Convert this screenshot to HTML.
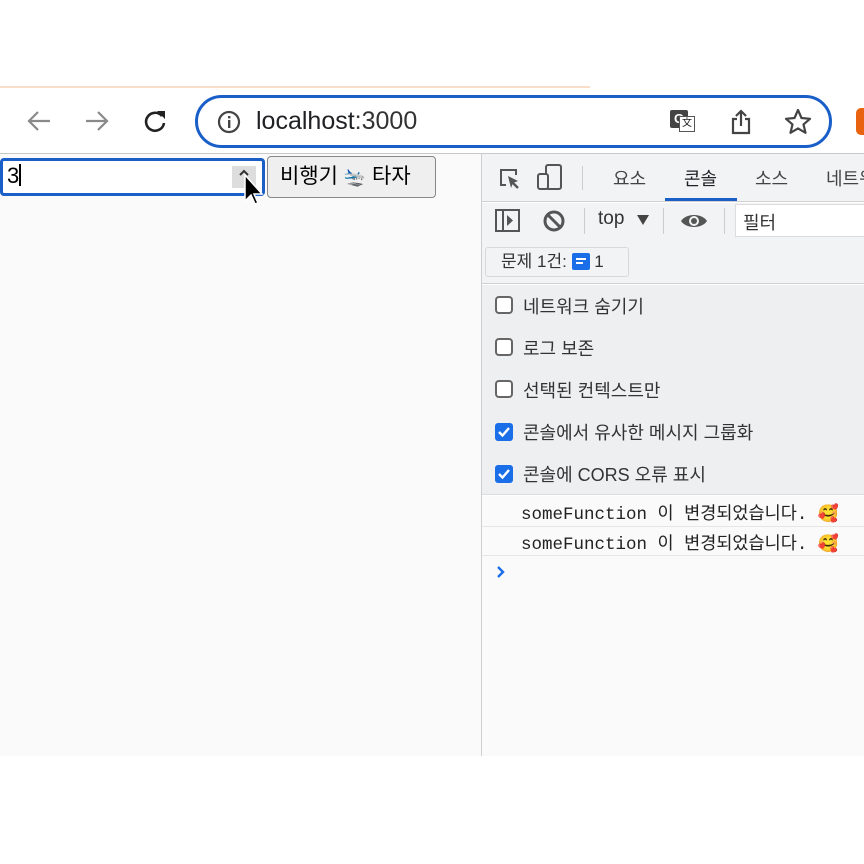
<!DOCTYPE html>
<html><head><meta charset="utf-8"><style>
*{margin:0;padding:0;box-sizing:border-box}
body{width:864px;height:864px;background:#fff;position:relative;overflow:hidden;font-family:"Liberation Sans","Noto Sans CJK KR",sans-serif;color:#202124}
.a{position:absolute}
.ko{font-family:"Liberation Sans","Noto Sans CJK KR",sans-serif}
</style></head><body>
<div class="a" style="left:0;top:86px;width:590px;height:2px;background:#f8ddc8"></div>
<div class="a" style="left:0;top:88px;width:864px;height:66px;background:#fff"></div>
<div class="a" style="left:0;top:153px;width:864px;height:1px;background:#c8c8c8"></div>
<svg class="a" style="left:26px;top:109px" width="26" height="24" viewBox="0 0 26 24"><path d="M24 12H3M12 3L3 12l9 9" stroke="#8a8a8a" stroke-width="2.2" fill="none"/></svg>
<svg class="a" style="left:84px;top:109px" width="26" height="24" viewBox="0 0 26 24"><path d="M2 12h21M14 3l9 9-9 9" stroke="#8a8a8a" stroke-width="2.2" fill="none"/></svg>
<svg class="a" style="left:142px;top:108px" width="26" height="26" viewBox="0 0 26 26"><path d="M20 8A9 9 0 1 0 22 15" stroke="#222" stroke-width="2.6" fill="none"/><path d="M15 3h8v8z" fill="#222"/></svg>
<div class="a" style="left:195px;top:95px;width:637px;height:53px;border:3px solid #1a5fc8;border-radius:27px;background:#fff"></div>
<svg class="a" style="left:216px;top:109px" width="26" height="26" viewBox="0 0 26 26"><circle cx="13" cy="13" r="10" stroke="#444" stroke-width="2.2" fill="none"/><rect x="12" y="11" width="2.4" height="8" fill="#444"/><rect x="12" y="7" width="2.4" height="2.4" fill="#444"/></svg>
<div class="a" style="left:256px;top:107px;font-size:25px;color:#202124">localhost<span style="color:#333">:3000</span></div>
<div class="a" style="left:670px;top:110px;width:18px;height:18px;background:#444;border-radius:2px;color:#fff;font-size:13px;font-weight:bold;text-align:center;line-height:18px">G</div>
<div class="a" style="left:679px;top:116px;width:16px;height:16px;border:1.5px solid #555;background:#fff;font-size:10px;text-align:center;line-height:13px">文</div>
<svg class="a" style="left:729px;top:108px" width="24" height="28" viewBox="0 0 24 28"><path d="M8 11H4v14h16V11h-4M12 18V3M7 8l5-5 5 5" stroke="#444" stroke-width="2.2" fill="none"/></svg>
<svg class="a" style="left:784px;top:108px" width="28" height="26" viewBox="0 0 28 26"><path d="M14 2l3.5 8 8.5.8-6.5 5.6 2 8.4L14 20.4 6.5 24.8l2-8.4L2 10.8l8.5-.8z" stroke="#444" stroke-width="2.2" fill="none" stroke-linejoin="round"/></svg>
<div class="a" style="left:856px;top:108px;width:16px;height:27px;background:#e8620f;border-radius:5px"></div>
<div class="a" style="left:0;top:154px;width:481px;height:602px;background:#fafafa"></div>
<div class="a" style="left:0;top:158px;width:265px;height:38px;border:3px solid #1a5fc8;border-radius:4px;background:#fff"></div>
<div class="a" style="left:7px;top:163px;font-size:22px;color:#000">3<span style="display:inline-block;width:1.5px;height:22px;background:#000;vertical-align:-3px"></span></div>
<div class="a" style="left:232px;top:166px;width:24px;height:22px;background:#ddd"></div>
<svg class="a" style="left:236px;top:166px" width="30" height="40" viewBox="0 0 30 40"><path d="M4 9l4-4 4 4" stroke="#333" stroke-width="2" fill="none"/><path d="M9 9v26l6-6 4 9 3-1-4-9h8z" fill="#000" stroke="#fff" stroke-width="1.5"/></svg>
<div class="a ko" style="left:267px;top:156px;width:169px;height:42px;border:1.5px solid #888;border-radius:4px;background:#efefef;font-size:21px;color:#000;line-height:39px;padding-left:12px">비행기 <span style="font-size:18px">🛬</span> 타자</div>
<div class="a" style="left:481px;top:154px;width:1px;height:602px;background:#cfcfcf"></div>
<div class="a" style="left:482px;top:154px;width:382px;height:48px;background:#f1f3f4;border-bottom:1px solid #d0d0d0"></div>
<svg class="a" style="left:496px;top:164px" width="28" height="28" viewBox="0 0 28 28"><path d="M10 21H5V6h15v5" stroke="#555" stroke-width="2" fill="none"/><path d="M12 12l3 12 2-5 5-2z" fill="#555"/><path d="M17 19l5 5" stroke="#555" stroke-width="2.4"/></svg>
<svg class="a" style="left:537px;top:163px" width="30" height="28" viewBox="0 0 30 28"><rect x="9" y="2" width="15" height="24" rx="2" stroke="#555" stroke-width="2" fill="none"/><rect x="1" y="11" width="10" height="15" rx="2" stroke="#555" stroke-width="2" fill="#f1f3f4"/></svg>
<div class="a" style="left:582px;top:166px;width:1px;height:24px;background:#ccc"></div>
<div class="a ko" style="left:613px;top:165px;font-size:18px;color:#444">요소</div>
<div class="a ko" style="left:684px;top:165px;font-size:18px;color:#202124">콘솔</div>
<div class="a" style="left:665px;top:198px;width:72px;height:3px;background:#1a5fc8"></div>
<div class="a ko" style="left:755px;top:165px;font-size:18px;color:#444">소스</div>
<div class="a ko" style="left:826px;top:165px;font-size:18px;color:#444;white-space:nowrap">네트워</div>
<div class="a" style="left:482px;top:203px;width:382px;height:40px;background:#f1f3f4"></div>
<svg class="a" style="left:494px;top:207px" width="28" height="28" viewBox="0 0 28 28"><rect x="2" y="3" width="23" height="21" stroke="#555" stroke-width="2" fill="none"/><path d="M9 3v21" stroke="#555" stroke-width="2"/><path d="M13 8l6 5.5-6 5.5z" fill="#555"/></svg>
<svg class="a" style="left:541px;top:208px" width="26" height="26" viewBox="0 0 26 26"><circle cx="13" cy="13" r="9" stroke="#555" stroke-width="3" fill="none"/><path d="M7 7l12 12" stroke="#555" stroke-width="3"/></svg>
<div class="a" style="left:584px;top:208px;width:1px;height:26px;background:#ccc"></div>
<div class="a" style="left:598px;top:208px;font-size:19px;color:#333">top</div>
<svg class="a" style="left:636px;top:214px" width="14" height="12"><path d="M1 1h12l-6 10z" fill="#444"/></svg>
<div class="a" style="left:663px;top:208px;width:1px;height:26px;background:#ccc"></div>
<svg class="a" style="left:680px;top:211px" width="28" height="20" viewBox="0 0 28 20"><path d="M1 10C6 2 22 2 27 10C22 18 6 18 1 10z" fill="#555"/><circle cx="14" cy="10" r="5" fill="#f1f3f4"/><circle cx="14" cy="10" r="3" fill="#555"/></svg>
<div class="a" style="left:724px;top:208px;width:1px;height:26px;background:#ccc"></div>
<div class="a ko" style="left:735px;top:204px;width:129px;height:33px;background:#fff;border:1px solid #ddd;border-right:none;font-size:18px;color:#333;padding:4px 7px">필터</div>
<div class="a" style="left:482px;top:243px;width:382px;height:41px;background:#f1f3f4;border-bottom:1px solid #d0d0d0"></div>
<div class="a ko" style="left:485px;top:247px;width:144px;height:30px;border:1px solid #d8d8d8;border-radius:3px;background:#f1f3f4;font-size:17px;color:#333;line-height:28px;padding-left:15px">문제 1건: <span style="display:inline-block;width:18px;height:17px;background:#1a6fe8;border-radius:2px;vertical-align:-3px;position:relative"><span style="position:absolute;left:4px;top:5px;width:10px;height:2px;background:#fff"></span><span style="position:absolute;left:4px;top:9px;width:7px;height:2px;background:#fff"></span></span> 1</div>
<div class="a" style="left:482px;top:285px;width:382px;height:210px;background:#eeeff1;border-bottom:1px solid #ddd"></div>
<div class="a" style="left:495px;top:296px;width:18px;height:18px;border:2px solid #666;border-radius:4px;background:#fff"></div>
<div class="a ko" style="left:523px;top:293px;font-size:18px;color:#333">네트워크 숨기기</div>
<div class="a" style="left:495px;top:338px;width:18px;height:18px;border:2px solid #666;border-radius:4px;background:#fff"></div>
<div class="a ko" style="left:523px;top:335px;font-size:18px;color:#333">로그 보존</div>
<div class="a" style="left:495px;top:380px;width:18px;height:18px;border:2px solid #666;border-radius:4px;background:#fff"></div>
<div class="a ko" style="left:523px;top:377px;font-size:18px;color:#333">선택된 컨텍스트만</div>
<svg class="a" style="left:495px;top:423px" width="18" height="18"><rect width="18" height="18" rx="3" fill="#1a6fe8"/><path d="M4 9l3.5 3.5L14 5" stroke="#fff" stroke-width="2.4" fill="none"/></svg>
<div class="a ko" style="left:523px;top:419px;font-size:18px;color:#333">콘솔에서 유사한 메시지 그룹화</div>
<svg class="a" style="left:495px;top:465px" width="18" height="18"><rect width="18" height="18" rx="3" fill="#1a6fe8"/><path d="M4 9l3.5 3.5L14 5" stroke="#fff" stroke-width="2.4" fill="none"/></svg>
<div class="a ko" style="left:523px;top:461px;font-size:18px;color:#333">콘솔에 CORS 오류 표시</div>
<div class="a" style="left:482px;top:496px;width:382px;height:260px;background:#fafafa"></div>
<div class="a" style="left:482px;top:526px;width:382px;height:1px;background:#e6e6e6"></div>
<div class="a" style="left:482px;top:555px;width:382px;height:1px;background:#e6e6e6"></div>
<div class="a" style="left:521px;top:500px;font-size:17.5px;font-family:'Liberation Mono','Noto Sans CJK KR',monospace;color:#222;white-space:nowrap">someFunction 이 변경되었습니다. <span style="font-size:17px">🥰</span></div>
<div class="a" style="left:521px;top:530px;font-size:17.5px;font-family:'Liberation Mono','Noto Sans CJK KR',monospace;color:#222;white-space:nowrap">someFunction 이 변경되었습니다. <span style="font-size:17px">🥰</span></div>
<svg class="a" style="left:496px;top:565px" width="10" height="14"><path d="M2 2l5 5-5 5" stroke="#1a6fe8" stroke-width="2.4" fill="none"/></svg>
</body></html>
